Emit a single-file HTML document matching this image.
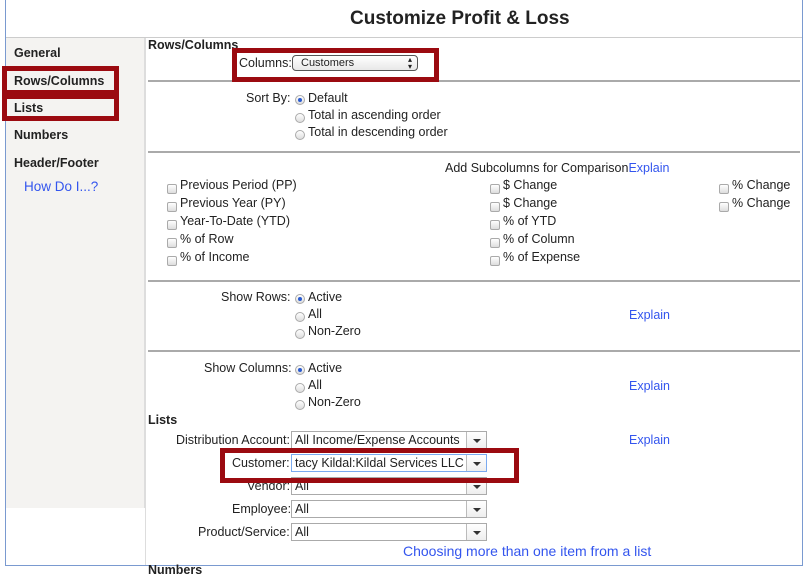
<!DOCTYPE html>
<html><head><style>
*{margin:0;padding:0;box-sizing:border-box}
body{width:805px;height:568px;background:#fff;position:relative;overflow:hidden;font-family:"Liberation Sans",sans-serif;font-size:12.5px;color:#222}
.a{position:absolute;white-space:nowrap}
.b{font-weight:bold}
.l{color:#3355ee}
.hr{position:absolute;left:148px;width:652px;height:2px;background:#aaa}
.rad,.chk{position:absolute;width:10px;height:10px;border:1px solid #aaa;background:linear-gradient(#fff,#ddd)}
.rad{border-radius:50%}
.rad.on::after{content:"";position:absolute;left:2px;top:2px;width:4px;height:4px;border-radius:50%;background:#2a5bd0}
.chk{border-radius:2px}
.sel{position:absolute;left:291px;width:196px;height:18px;border:1px solid #aaa;background:#fff;font-size:12.5px;padding:1px 3px;overflow:hidden}
.sel::after{content:"";position:absolute;right:0;top:0;width:19px;height:16px;border-left:1px solid #bbb;background:linear-gradient(#fff,#eee)}
.ar{position:absolute;left:473px;width:0;height:0;border-left:4px solid transparent;border-right:4px solid transparent;border-top:4px solid #333}
.red{position:absolute;border:5px solid #9b0a10}
</style></head><body>
<div class="a" style="left:5px;top:0;width:798px;height:566px;border:1px solid #7a9ad0;border-top:none"></div>
<div class="a" style="left:6px;top:38px;width:139px;height:470px;background:#f4f3f1;border-right:1px solid #ddd"></div>
<div class="a" style="left:145px;top:38px;width:1px;height:527px;background:#ddd"></div>
<div class="a" style="left:6px;top:37px;width:796px;height:1px;background:#ccc"></div>
<div class="a b" style="left:350px;top:8px;font-size:19px;color:#222">Customize Profit &amp; Loss</div>

<div class="a b" style="left:14px;top:46px">General</div>
<div class="a b" style="left:14px;top:74px">Rows/Columns</div>
<div class="a b" style="left:14px;top:101px">Lists</div>
<div class="a b" style="left:14px;top:128px">Numbers</div>
<div class="a b" style="left:14px;top:156px">Header/Footer</div>
<div class="a l" style="left:24px;top:179px;font-size:13.5px">How Do I...?</div>

<div class="a b" style="left:148px;top:38px">Rows/Columns</div>
<div class="a" style="left:239px;top:56px">Columns:</div>
<div class="a" style="left:292px;top:55px;width:126px;height:16px;border:1px solid #555;border-radius:4px;background:linear-gradient(#fff,#e8e8e8);font-size:11px;padding:1px 8px">Customers<span style="position:absolute;right:5px;top:0;font-size:8px;line-height:7px">▴<br>▾</span></div>
<div class="hr" style="top:80px"></div>

<div class="a" style="left:246px;top:91px">Sort By:</div>
<div class="rad on" style="left:295px;top:95px"></div><div class="a" style="left:308px;top:91px">Default</div>
<div class="rad" style="left:295px;top:113px"></div><div class="a" style="left:308px;top:108px">Total in ascending order</div>
<div class="rad" style="left:295px;top:130px"></div><div class="a" style="left:308px;top:125px">Total in descending order</div>
<div class="hr" style="top:151px"></div>

<div class="a" style="left:445px;top:161px">Add Subcolumns for Comparison<span class="l">Explain</span></div>
<div class="chk" style="left:167px;top:184px"></div><div class="a" style="left:180px;top:178px">Previous Period (PP)</div>
<div class="chk" style="left:167px;top:202px"></div><div class="a" style="left:180px;top:196px">Previous Year (PY)</div>
<div class="chk" style="left:167px;top:220px"></div><div class="a" style="left:180px;top:214px">Year-To-Date (YTD)</div>
<div class="chk" style="left:167px;top:238px"></div><div class="a" style="left:180px;top:232px">% of Row</div>
<div class="chk" style="left:167px;top:256px"></div><div class="a" style="left:180px;top:250px">% of Income</div>
<div class="chk" style="left:490px;top:184px"></div><div class="a" style="left:503px;top:178px">$ Change</div>
<div class="chk" style="left:490px;top:202px"></div><div class="a" style="left:503px;top:196px">$ Change</div>
<div class="chk" style="left:490px;top:220px"></div><div class="a" style="left:503px;top:214px">% of YTD</div>
<div class="chk" style="left:490px;top:238px"></div><div class="a" style="left:503px;top:232px">% of Column</div>
<div class="chk" style="left:490px;top:256px"></div><div class="a" style="left:503px;top:250px">% of Expense</div>
<div class="chk" style="left:719px;top:184px"></div><div class="a" style="left:732px;top:178px">% Change</div>
<div class="chk" style="left:719px;top:202px"></div><div class="a" style="left:732px;top:196px">% Change</div>
<div class="hr" style="top:280px"></div>

<div class="a" style="left:221px;top:290px">Show Rows:</div>
<div class="rad on" style="left:295px;top:294px"></div><div class="a" style="left:308px;top:290px">Active</div>
<div class="rad" style="left:295px;top:312px"></div><div class="a" style="left:308px;top:307px">All</div>
<div class="rad" style="left:295px;top:329px"></div><div class="a" style="left:308px;top:324px">Non-Zero</div>
<div class="a l" style="left:629px;top:308px">Explain</div>
<div class="hr" style="top:350px"></div>

<div class="a" style="left:204px;top:361px">Show Columns:</div>
<div class="rad on" style="left:295px;top:365px"></div><div class="a" style="left:308px;top:361px">Active</div>
<div class="rad" style="left:295px;top:383px"></div><div class="a" style="left:308px;top:378px">All</div>
<div class="rad" style="left:295px;top:400px"></div><div class="a" style="left:308px;top:395px">Non-Zero</div>
<div class="a l" style="left:629px;top:379px">Explain</div>

<div class="a b" style="left:148px;top:413px">Lists</div>
<div class="a" style="left:176px;top:433px">Distribution Account:</div>
<div class="sel" style="top:431px">All Income/Expense Accounts</div><div class="ar" style="top:439px"></div>
<div class="a l" style="left:629px;top:433px">Explain</div>
<div class="a" style="left:232px;top:456px">Customer:</div>
<div class="sel" style="top:454px;border-color:#7aaaf0">tacy Kildal:Kildal Services LLC</div><div class="ar" style="top:462px"></div>
<div class="a" style="left:247px;top:479px">Vendor:</div>
<div class="sel" style="top:477px">All</div><div class="ar" style="top:485px"></div>
<div class="a" style="left:232px;top:502px">Employee:</div>
<div class="sel" style="top:500px">All</div><div class="ar" style="top:508px"></div>
<div class="a" style="left:198px;top:525px">Product/Service:</div>
<div class="sel" style="top:523px">All</div><div class="ar" style="top:531px"></div>
<div class="a l" style="left:403px;top:543px;font-size:14px">Choosing more than one item from a list</div>
<div class="a b" style="left:148px;top:563px">Numbers</div>

<div class="red" style="left:232px;top:48px;width:207px;height:34px"></div>
<div class="red" style="left:2px;top:66px;width:117px;height:29px"></div>
<div class="red" style="left:2px;top:94px;width:117px;height:27px"></div>
<div class="red" style="left:220px;top:448px;width:299px;height:35px"></div>
</body></html>
